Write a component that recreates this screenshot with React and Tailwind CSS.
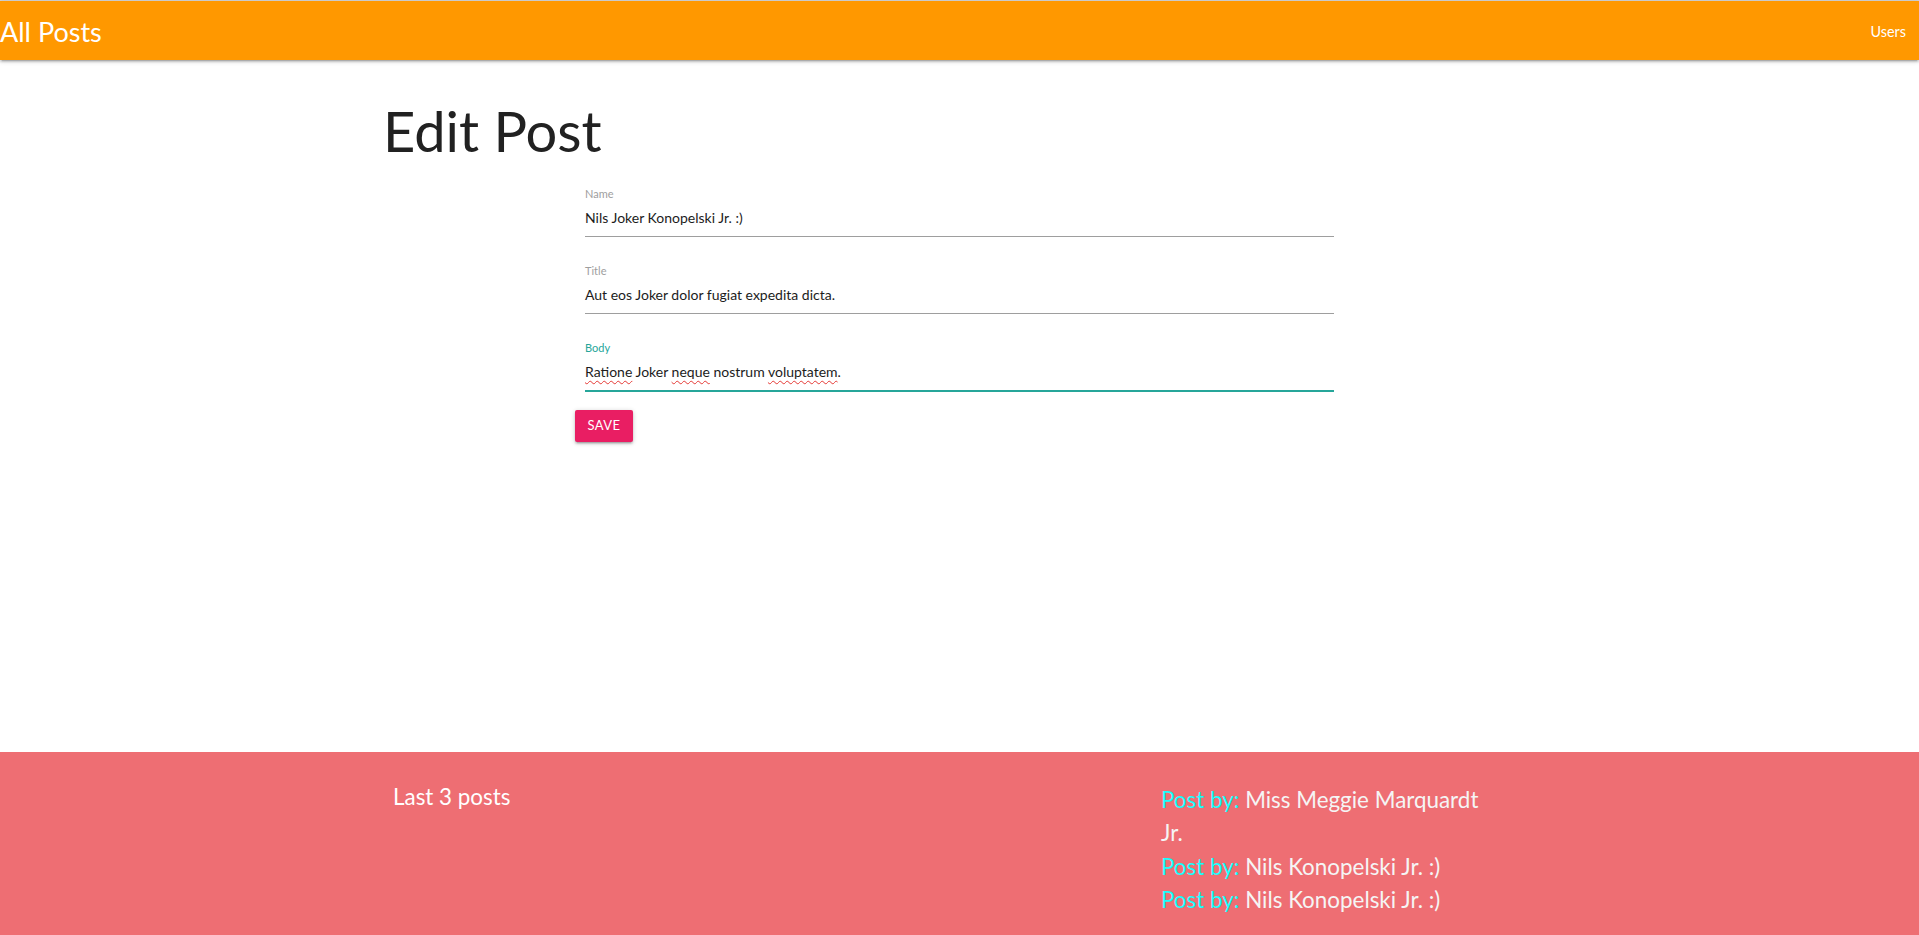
const FIELDS = [
  { label: "Name", value: "Nils Joker Konopelski Jr. :)" },
  { label: "Title", value: "Aut eos Joker dolor fugiat expedita dicta." },
];

const LAST_POSTS = [
  ["Miss Meggie Marquardt", "Jr."],
  ["Nils Konopelski Jr. :)"],
  ["Nils Konopelski Jr. :)"],
];

function Field({ label, children, focused }) {
  return (
    <div className="mt-[28px] first:mt-0">
      <div
        className={`h-[11px] text-[11px] leading-[11px] ${
          focused ? "text-[#26a69a]" : "text-[#9e9e9e]"
        }`}
      >
        {label}
      </div>
      <div
        className={`h-[38px] flex items-center text-[14px] text-[#1c1c1c] border-b ${
          focused
            ? "border-[#26a69a] shadow-[0_1px_0_0_#26a69a]"
            : "border-[#9e9e9e]"
        }`}
      >
        {children}
      </div>
    </div>
  );
}

function Typo({ children }) {
  return (
    <span className="underline decoration-wavy decoration-[#e53935] decoration-1 underline-offset-[3px]">
      {children}
    </span>
  );
}

export default function App() {
  return (
    <div
      className="min-h-screen flex flex-col bg-white"
      style={{ fontFamily: "Lato, 'Open Sans', sans-serif" }}
    >
      <div className="h-px bg-[#d6d6d6]" />
      <nav className="relative z-10 h-[59px] bg-[#ff9800] flex items-center justify-between shadow-[0_2px_2px_0_rgba(0,0,0,0.14),0_3px_1px_-2px_rgba(0,0,0,0.12),0_1px_5px_0_rgba(0,0,0,0.2)]">
        <a className="mt-[3px] text-[27px] text-white">All Posts</a>
        <a className="mt-[2px] pr-[13px] text-[14.4px] text-white">Users</a>
      </nav>

      <main className="flex-1">
        <h3 className="mt-[43px] pl-[383px] text-[56px] leading-none font-normal text-[#212121]">
          Edit Post
        </h3>

        <form className="mt-[29px] w-[769px] mx-auto">
          <div className="px-[10px]">
            {FIELDS.map((f) => (
              <Field key={f.label} label={f.label}>
                {f.value}
              </Field>
            ))}
            <Field label="Body" focused>
              <span>
                <Typo>Ratione</Typo> Joker <Typo>neque</Typo> nostrum{" "}
                <Typo>voluptatem</Typo>.
              </span>
            </Field>
          </div>
          <button
            type="button"
            className="mt-[19px] w-[58px] h-[32px] rounded-[2px] bg-[#e91e63] text-white text-[13px] uppercase tracking-[0.4px] shadow-[0_2px_2px_0_rgba(0,0,0,0.14),0_3px_1px_-2px_rgba(0,0,0,0.12),0_1px_5px_0_rgba(0,0,0,0.2)]"
          >
            Save
          </button>
        </form>
      </main>

      <footer className="bg-[#ee6e73] pt-[28px] pb-[18px]">
        <div className="flex pl-[393px]">
          <div className="w-[768px]">
            <h5 className="text-[22.4px] leading-[33.6px] text-white">
              Last 3 posts
            </h5>
          </div>
          <ul className="pt-[3px] text-[22.4px] leading-[33.6px]">
            {LAST_POSTS.map((lines, i) => (
              <li key={i}>
                <span className="text-[#18ffff]">Post by: </span>
                <span className="text-[#f5f5f5]">
                  {lines[0]}
                  {lines[1] && (
                    <>
                      <br />
                      {lines[1]}
                    </>
                  )}
                </span>
              </li>
            ))}
          </ul>
        </div>
      </footer>
    </div>
  );
}
